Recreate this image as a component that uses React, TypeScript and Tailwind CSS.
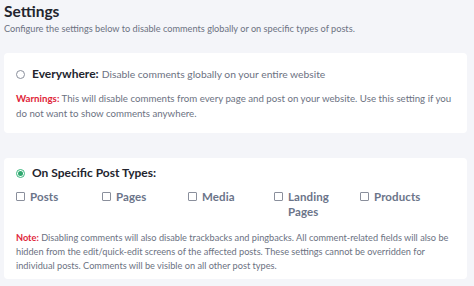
import { useState } from 'react';

const postTypes = ['Posts', 'Pages', 'Media', 'Landing Pages', 'Products'];

function Radio({ checked }: { checked: boolean }) {
  return (
    <span
      className={
        'flex h-[9px] w-[9px] shrink-0 items-center justify-center rounded-full border ' +
        (checked ? 'border-[#3bb77e]' : 'border-[#8a8f9c]')
      }
    >
      {checked && <span className="h-[5px] w-[5px] rounded-full bg-[#2fa86f]" />}
    </span>
  );
}

function Box() {
  return <span className="mt-[3px] h-[9px] w-[9px] shrink-0 rounded-[1px] border border-[#8a8f9c] bg-white" />;
}

function App() {
  const [mode] = useState<'everywhere' | 'types'>('types');

  return (
    <div
      className="h-[286px] w-[474px] overflow-hidden bg-[#f4f5f9] pl-[4px] pr-[7px] text-[#5f6577]"
      style={{ fontFamily: 'Lato, "Liberation Sans", sans-serif' }}
    >
      <h1 className="text-[15.5px] font-bold leading-[22px] text-[#23252e]">Settings</h1>
      <p className="mt-[1px] text-[9.2px] leading-[12px] text-[#6c7282]">
        Configure the settings below to disable comments globally or on specific types of posts.
      </p>

      <div className="mt-[18px] h-[80px] rounded-[4px] bg-white px-[12px] pt-[13px]">
        <div className="flex items-center gap-[7px]">
          <Radio checked={mode === 'everywhere'} />
          <span className="text-[12px] leading-[16px]">
            <span className="font-bold text-[#23252e]">Everywhere:</span>{' '}
            <span className="text-[10.3px] text-[#6c7282]">Disable comments globally on your entire website</span>
          </span>
        </div>
        <p className="mt-[9px] text-[9.7px] leading-[15px] text-[#6c7282]">
          <span className="font-bold text-[#e0263a]">Warnings:</span> This will disable comments from every
          page and post on your website. Use this setting if you do not want to show comments anywhere.
        </p>
      </div>

      <div className="mt-[25px] h-[121px] rounded-[4px] bg-white px-[12px] pt-[7px]">
        <div className="flex items-center gap-[7px]">
          <Radio checked={mode === 'types'} />
          <span className="text-[12px] font-bold leading-[16px] text-[#23252e]">On Specific Post Types:</span>
        </div>
        <div className="mt-[8px] grid grid-cols-[86px_86px_86px_86px_86px]">
          {postTypes.map((t) => (
            <label key={t} className="flex gap-[5px] pr-[20px]">
              <Box />
              <span className="text-[11.5px] font-bold leading-[15px] tracking-[0.1px] text-[#6b7489]">{t}</span>
            </label>
          ))}
        </div>
        <p className="mt-[12px] text-[9.2px] leading-[14px] text-[#6c7282]">
          <span className="font-bold text-[#e0263a]">Note:</span> Disabling comments will also disable
          trackbacks and pingbacks. All comment-related fields will also be hidden from the edit/quick-edit
          screens of the affected posts. These settings cannot be overridden for individual posts. Comments
          will be visible on all other post types.
        </p>
      </div>
    </div>
  );
}

export default App;
